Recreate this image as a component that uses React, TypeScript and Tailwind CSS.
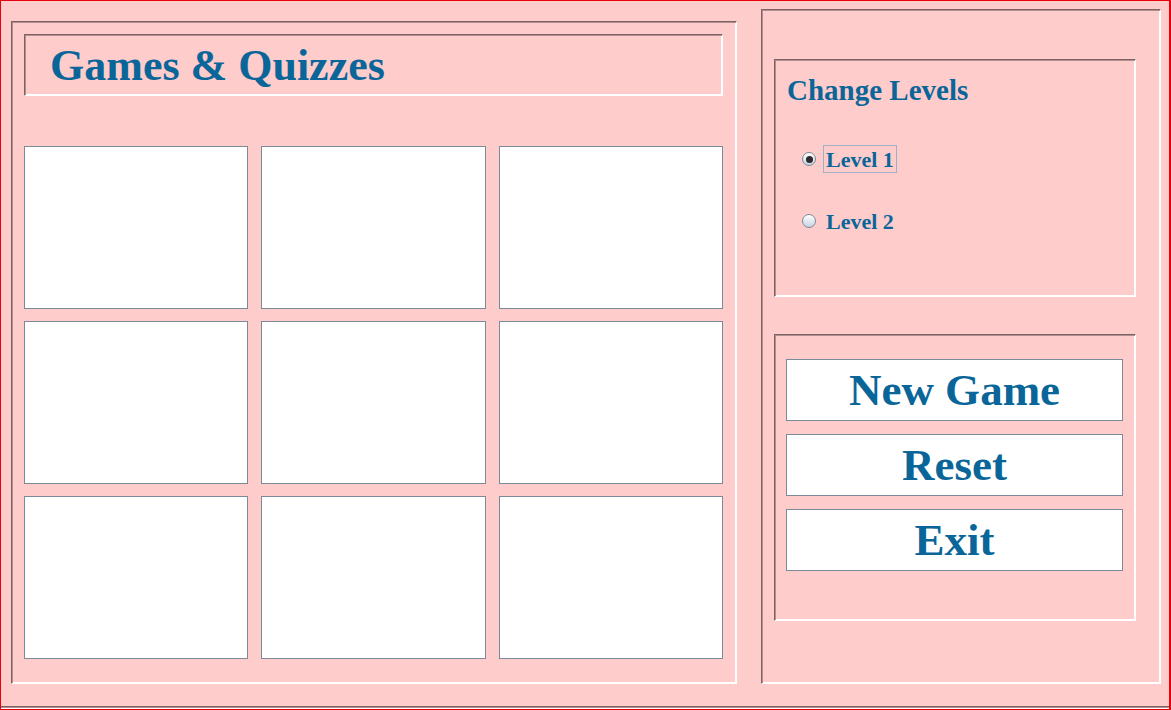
import React from 'react';

const bevel =
  'border border-t-[#7c6363] border-l-[#7c6363] border-r-white border-b-white shadow-[inset_1px_1px_0_#b28e8e,inset_-1px_-1px_0_#ffffff]';

function Radio({ label, checked }: { label: string; checked?: boolean }) {
  return (
    <div className="flex items-center h-[28px]">
      <span className="ml-[15px] w-[14px] h-[14px] rounded-full border border-[#7d8894] bg-gradient-to-b from-white to-[#c6d4e2] flex items-center justify-center">
        {checked && <span className="w-[7px] h-[7px] rounded-full bg-[#2b2b2b]" />}
      </span>
      <span
        className={
          'ml-[7px] px-[2px] h-[28px] flex items-center text-[22px] font-bold text-[#0a6699] ' +
          (checked ? 'border border-[#9fb0c8]' : 'border border-transparent')
        }
      >
        {label}
      </span>
    </div>
  );
}

export default function App() {
  const cells = Array.from({ length: 9 });
  const buttons = ['New Game', 'Reset', 'Exit'];

  return (
    <div
      className="w-[1171px] h-[710px] bg-[#ffcccc] border-l border-t border-r-2 border-b border-red-600 flex flex-col overflow-hidden"
      style={{ fontFamily: '"Liberation Serif", "Times New Roman", serif' }}
    >
      <div className="flex-1 flex items-start">
        {/* Game board */}
        <div className={`ml-[10px] mt-[20px] w-[726px] h-[663px] pl-[12px] pt-[12px] pr-[13px] ${bevel}`}>
          <div className={`h-[62px] pl-[25px] flex items-center ${bevel}`}>
            <h1 className="text-[44px] font-bold text-[#0a6699] leading-none pt-[2px]">Games &amp; Quizzes</h1>
          </div>
          <div className="mt-[50px] grid grid-cols-3 gap-x-[13px] gap-y-[12px]">
            {cells.map((_, i) => (
              <div key={i} className="h-[163px] bg-white border border-[#7a8a99]" />
            ))}
          </div>
        </div>

        {/* Side panel */}
        <div className={`ml-[24px] mt-[8px] w-[400px] h-[675px] pl-[12px] pt-[49px] ${bevel}`}>
          <div className={`w-[362px] h-[238px] pl-[12px] pt-[16px] ${bevel}`}>
            <h2 className="text-[29px] font-bold text-[#0a6699] leading-none">Change Levels</h2>
            <div className="mt-[40px] flex flex-col gap-[34px]">
              <Radio label="Level 1" checked />
              <Radio label="Level 2" />
            </div>
          </div>

          <div className={`mt-[37px] w-[362px] h-[287px] pl-[11px] pt-[24px] flex flex-col gap-[13px] ${bevel}`}>
            {buttons.map((b) => (
              <button
                key={b}
                className="w-[337px] h-[62px] bg-white border border-[#7a8a99] text-[45px] font-bold text-[#0a6699] leading-none flex items-center justify-center"
              >
                {b}
              </button>
            ))}
          </div>
        </div>
      </div>
      <div className="h-[3px] border-t border-t-[#7c6363] bg-[#b28e8e] border-b border-b-white" />
    </div>
  );
}
